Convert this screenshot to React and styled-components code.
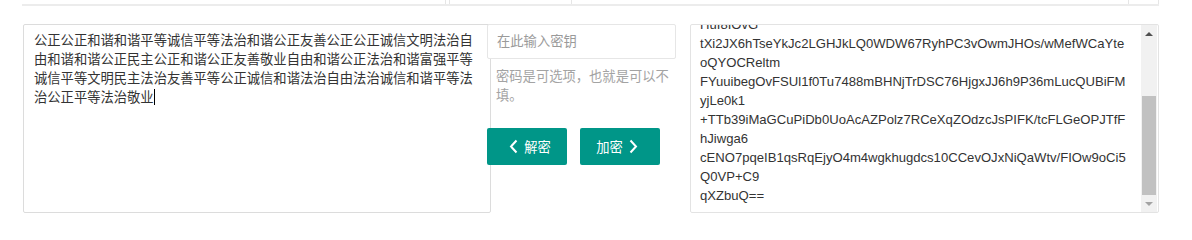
import React from "react";
import styled, { createGlobalStyle } from "styled-components";

const GlobalStyle = createGlobalStyle`
  body {
    margin: 0;
    background: #fff;
    font-family: "Liberation Sans", "Noto Sans CJK SC", sans-serif;
    color: #333;
  }
`;

const cjk = `"Liberation Sans", "Noto Sans CJK SC", sans-serif`;

const Page = styled.div`
  width: 1192px;
  height: 240px;
  overflow: hidden;
`;

const PrevRow = styled.div`
  display: flex;
  margin-left: 22px;
  width: 1137px;
  height: 4px;
  border-bottom: 2px solid #ececec;
`;

const PrevCell = styled.div`
  width: ${(p) => (p.$w ? `${p.$w}px` : "auto")};
  flex: ${(p) => (p.$w ? "none" : "1")};
  border-right: 1px solid #e6e6e6;
  border-left: ${(p) => (p.$edge ? "1px solid #e6e6e6" : "none")};
  margin-right: ${(p) => p.$gap || 0}px;
`;

const Row = styled.div`
  display: flex;
  align-items: flex-start;
  margin: 18px 0 0 23px;
`;

const PlainBox = styled.div`
  box-sizing: border-box;
  width: 468px;
  height: 189px;
  border: 1px solid #dcdcdc;
  border-radius: 2px;
  padding: 6px 10px;
  font-family: ${cjk};
  font-size: 13.3px;
  line-height: 19px;
  color: #333;
  word-break: break-all;
`;

const Caret = styled.span`
  display: inline-block;
  width: 1px;
  height: 16px;
  background: #000;
  vertical-align: -3px;
`;

const Middle = styled.div`
  width: 189px;
  margin: 0 14px 0 -4px;
  display: flex;
  flex-direction: column;
`;

const KeyInput = styled.input`
  box-sizing: border-box;
  width: 189px;
  height: 35px;
  border: 1px solid #e6e6e6;
  border-radius: 2px;
  padding: 0 9px;
  background: #fff;
  font-family: ${cjk};
  font-size: 13.3px;
  outline: none;
  &::placeholder {
    color: #9a9a9a;
  }
`;

const Hint = styled.div`
  margin-top: 8px;
  padding: 0 0 0 9px;
  font-family: ${cjk};
  font-size: 13.3px;
  line-height: 19px;
  color: #a3a3a3;
  word-break: break-all;
`;

const Buttons = styled.div`
  display: flex;
  gap: 13px;
  margin-top: 23px;
`;

const Button = styled.button`
  box-sizing: border-box;
  width: 80px;
  height: 37px;
  border: none;
  border-radius: 2px;
  background: #009688;
  color: #fff;
  font-family: ${cjk};
  font-size: 13.3px;
  display: flex;
  align-items: center;
  justify-content: center;
  gap: 6px;
  padding: ${(p) => (p.$left ? "0 0 0 6px" : "0 6px 0 0")};
  cursor: pointer;
`;

const Chevron = ({ dir }) => (
  <svg width="9" height="15" viewBox="0 0 9 15">
    <polyline
      points={dir === "left" ? "7.5,1.5 2,7.5 7.5,13.5" : "1.5,1.5 7,7.5 1.5,13.5"}
      fill="none"
      stroke="#fff"
      strokeWidth="2"
    />
  </svg>
);

const OutBox = styled.div`
  box-sizing: border-box;
  width: 469px;
  height: 189px;
  border: 1px solid #e3e3e3;
  border-radius: 2px;
  display: flex;
`;

const OutText = styled.div`
  flex: 1;
  overflow: hidden;
  display: flex;
  flex-direction: column;
  justify-content: flex-end;
  padding: 0 0 7px 9px;
  font-family: "Liberation Sans", Arial, sans-serif;
  font-size: 13.1px;
  line-height: 19px;
  color: #333;
  white-space: pre;
`;

const Scrollbar = styled.div`
  width: 16px;
  margin: 0 1px 0 0;
  background: #f1f1f1;
  display: flex;
  flex-direction: column;
  align-items: center;
`;

const Arrow = styled.div`
  height: 17px;
  width: 16px;
  display: flex;
  align-items: center;
  justify-content: center;
  &::after {
    content: "";
    border-left: 4px solid transparent;
    border-right: 4px solid transparent;
    ${(p) =>
      p.$up
        ? "border-bottom: 4px solid #505050;"
        : "border-top: 4px solid #a3a3a3;"}
  }
`;

const Track = styled.div`
  flex: 1;
  width: 14px;
  display: flex;
  flex-direction: column;
  justify-content: flex-end;
`;

const Thumb = styled.div`
  height: 99px;
  background: #c1c1c1;
`;

const cipherLines = [
  "HuI8IOvG",
  "tXi2JX6hTseYkJc2LGHJkLQ0WDW67RyhPC3vOwmJHOs/wMefWCaYte",
  "oQYOCReltm",
  "FYuuibegOvFSUl1f0Tu7488mBHNjTrDSC76HjgxJJ6h9P36mLucQUBiFM",
  "yjLe0k1",
  "+TTb39iMaGCuPiDb0UoAcAZPolz7RCeXqZOdzcJsPIFK/tcFLGeOPJTfF",
  "hJiwga6",
  "cENO7pqeIB1qsRqEjyO4m4wgkhugdcs10CCevOJxNiQaWtv/FIOw9oCi5",
  "Q0VP+C9",
  "qXZbuQ==",
];

const plain =
  "公正公正和谐和谐平等诚信平等法治和谐公正友善公正公正诚信文明法治自由和谐和谐公正民主公正和谐公正友善敬业自由和谐公正法治和谐富强平等诚信平等文明民主法治友善平等公正诚信和谐法治自由法治诚信和谐平等法治公正平等法治敬业";

export default function App() {
  return (
    <Page>
      <GlobalStyle />
      <PrevRow>
        <PrevCell $w={423} $gap={3} />
        <PrevCell $w={121} $edge />
        <PrevCell />
        <PrevCell $w={29} />
      </PrevRow>
      <Row>
        <PlainBox>
          {plain}
          <Caret />
        </PlainBox>
        <Middle>
          <KeyInput placeholder="在此输入密钥" />
          <Hint>密码是可选项，也就是可以不填。</Hint>
          <Buttons>
            <Button $left>
              <Chevron dir="left" />
              解密
            </Button>
            <Button>
              加密
              <Chevron dir="right" />
            </Button>
          </Buttons>
        </Middle>
        <OutBox>
          <OutText>
            {cipherLines.map((l, i) => (
              <div key={i}>{l}</div>
            ))}
          </OutText>
          <Scrollbar>
            <Arrow $up />
            <Track>
              <Thumb />
            </Track>
            <Arrow />
          </Scrollbar>
        </OutBox>
      </Row>
    </Page>
  );
}
